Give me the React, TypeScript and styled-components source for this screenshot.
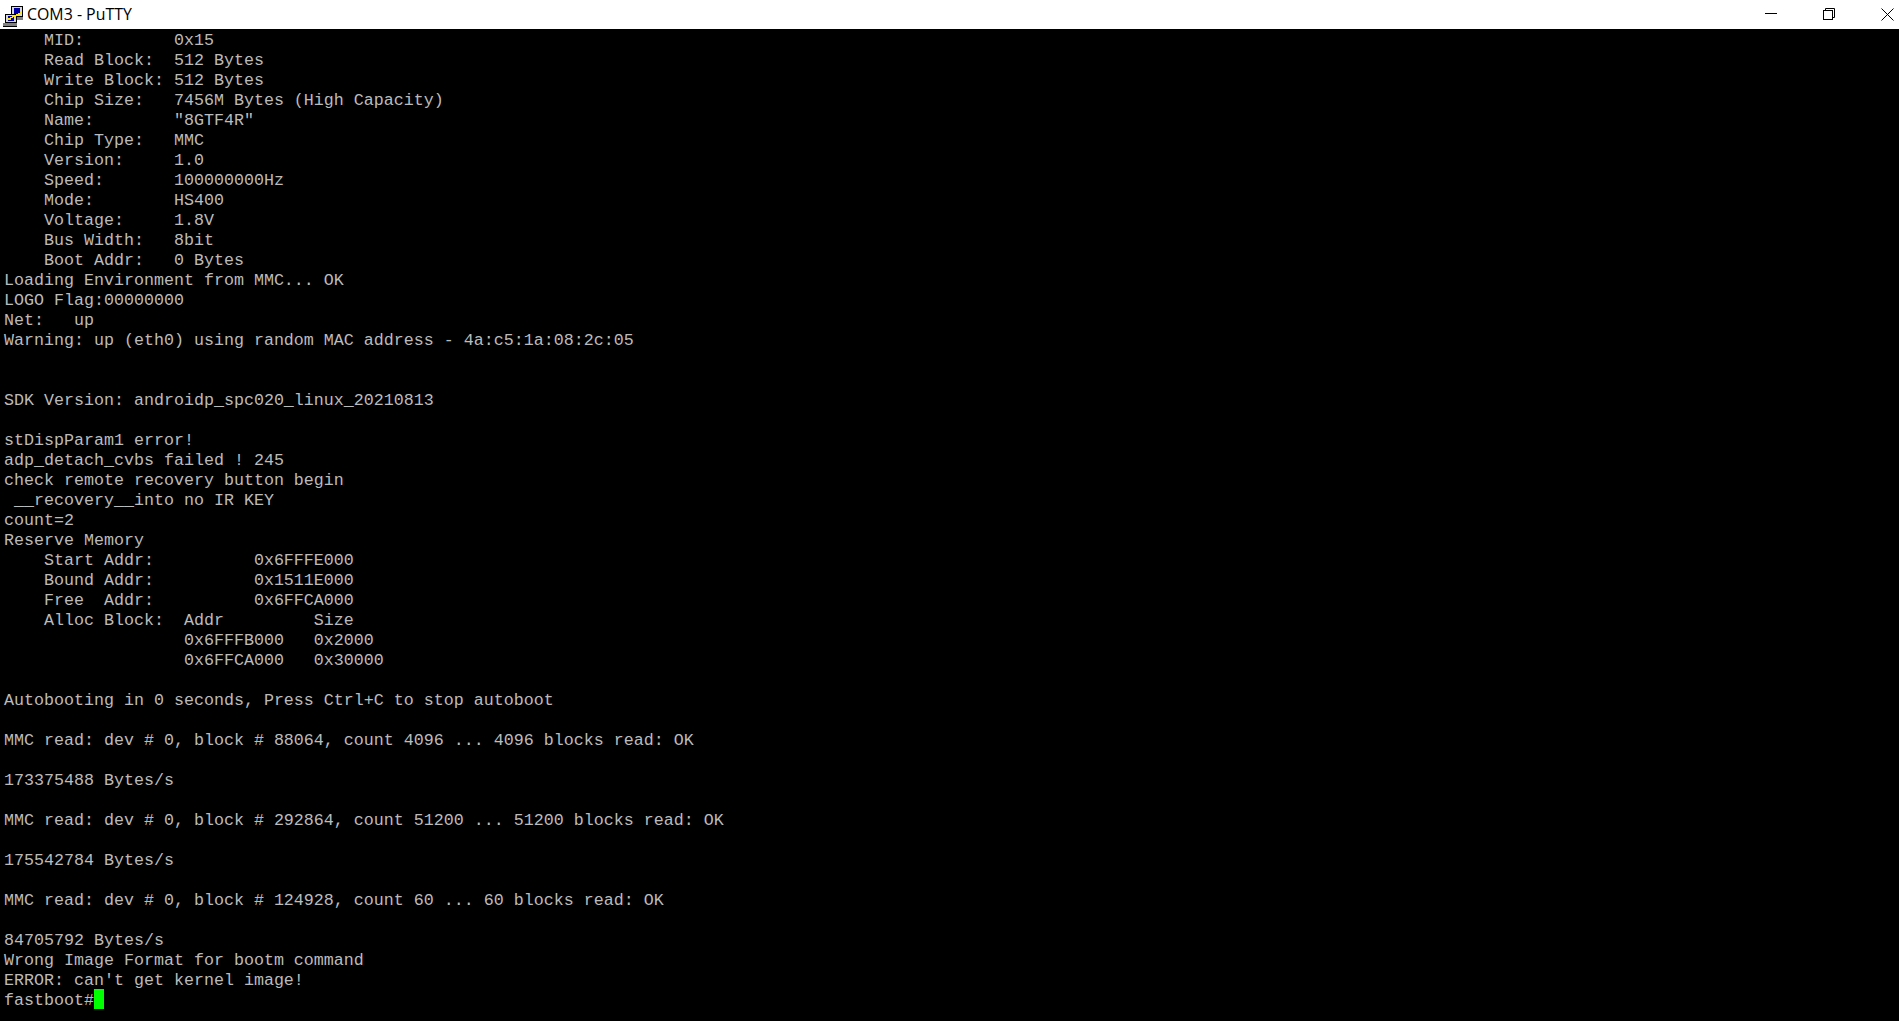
import React from "react";
import styled, { createGlobalStyle } from "styled-components";

const Global = createGlobalStyle`
  html, body { margin: 0; padding: 0; height: 100%; background: #fff; overflow: hidden; }
  #root { height: 100%; }
`;

const Win = styled.div`
  display: flex;
  flex-direction: column;
  width: 1901px;
  height: 1021px;
  background: #fff;
`;

const TitleBar = styled.div`
  display: flex;
  align-items: center;
  height: 29px;
  flex: none;
  background: #fff;
`;

const AppIcon = styled.svg`
  width: 22px;
  height: 24px;
  margin: 0 3px 0 2px;
  flex: none;
`;

const Title = styled.div`
  flex: 1;
  font: 15.9px/29px "Open Sans", "Noto Sans", sans-serif;
  color: #000;
`;

const Controls = styled.div`
  display: flex;
  align-items: center;
  gap: 46px;
  padding: 0 7px 1px 0;
`;

const Ctl = styled.svg`
  display: block;
  flex: none;
`;

const Terminal = styled.pre`
  flex: 1;
  margin: 0 2px 0 0;
  padding: 2px 0 0 4px;
  background: #000;
  color: #bbb;
  font: 16.67px/20px "Liberation Mono", monospace;
  overflow: hidden;
`;

const Cursor = styled.span`
  display: inline-block;
  width: 10px;
  height: 20px;
  margin-top: -2px;
  background: #0f0;
  vertical-align: top;
`;

const text = `    MID:         0x15
    Read Block:  512 Bytes
    Write Block: 512 Bytes
    Chip Size:   7456M Bytes (High Capacity)
    Name:        "8GTF4R"
    Chip Type:   MMC
    Version:     1.0
    Speed:       100000000Hz
    Mode:        HS400
    Voltage:     1.8V
    Bus Width:   8bit
    Boot Addr:   0 Bytes
Loading Environment from MMC... OK
LOGO Flag:00000000
Net:   up
Warning: up (eth0) using random MAC address - 4a:c5:1a:08:2c:05


SDK Version: androidp_spc020_linux_20210813

stDispParam1 error!
adp_detach_cvbs failed ! 245
check remote recovery button begin
 __recovery__into no IR KEY
count=2
Reserve Memory
    Start Addr:          0x6FFFE000
    Bound Addr:          0x1511E000
    Free  Addr:          0x6FFCA000
    Alloc Block:  Addr         Size
                  0x6FFFB000   0x2000
                  0x6FFCA000   0x30000

Autobooting in 0 seconds, Press Ctrl+C to stop autoboot

MMC read: dev # 0, block # 88064, count 4096 ... 4096 blocks read: OK

173375488 Bytes/s

MMC read: dev # 0, block # 292864, count 51200 ... 51200 blocks read: OK

175542784 Bytes/s

MMC read: dev # 0, block # 124928, count 60 ... 60 blocks read: OK

84705792 Bytes/s
Wrong Image Format for bootm command
ERROR: can't get kernel image!
fastboot#`;

export default function App() {
  return (
    <Win>
      <Global />
      <TitleBar>
        <AppIcon viewBox="0 0 22 24" shapeRendering="crispEdges">
          {/* upper computer */}
          <rect x="9" y="3" width="12" height="11" fill="#000" />
          <rect x="10" y="4" width="10" height="9" fill="#d8d8d8" />
          <rect x="12" y="5" width="6" height="6" fill="#0000a8" />
          <rect x="9" y="14" width="12" height="3" fill="#808080" />
          {/* lower computer */}
          <rect x="3" y="11" width="12" height="9" fill="#000" />
          <rect x="4" y="12" width="10" height="7" fill="#d8d8d8" />
          <rect x="6" y="13" width="6" height="5" fill="#0000a8" />
          <rect x="1" y="20" width="14" height="3" fill="#808080" />
          <rect x="1" y="23" width="14" height="1" fill="#000" />
          {/* lightning bolt */}
          <path d="M6 15h2v-1h2v-1h2v-1h2v-1h2v-1h2v-2h1v3h-2v1h-2v1h-2v1h-2v1h-2v2h-3z" fill="#ffe800" />
        </AppIcon>
        <Title>COM3 - PuTTY</Title>
        <Controls>
          <Ctl width="12" height="12" viewBox="0 0 12 12">
            <rect width="12" height="1" y="5" fill="#000" />
          </Ctl>
          <Ctl width="12" height="12" viewBox="0 0 12 12" fill="none" stroke="#000">
            <rect x="0.5" y="2.5" width="9" height="9" />
            <path d="M2.5 2.5V0.5H11.5V9.5H9.5" />
          </Ctl>
          <Ctl width="13" height="13" viewBox="0 0 13 13" stroke="#000" fill="none">
            <path d="M0.5 0.5L12.5 12.5M12.5 0.5L0.5 12.5" />
          </Ctl>
        </Controls>
      </TitleBar>
      <Terminal>{text}<Cursor /></Terminal>
    </Win>
  );
}
